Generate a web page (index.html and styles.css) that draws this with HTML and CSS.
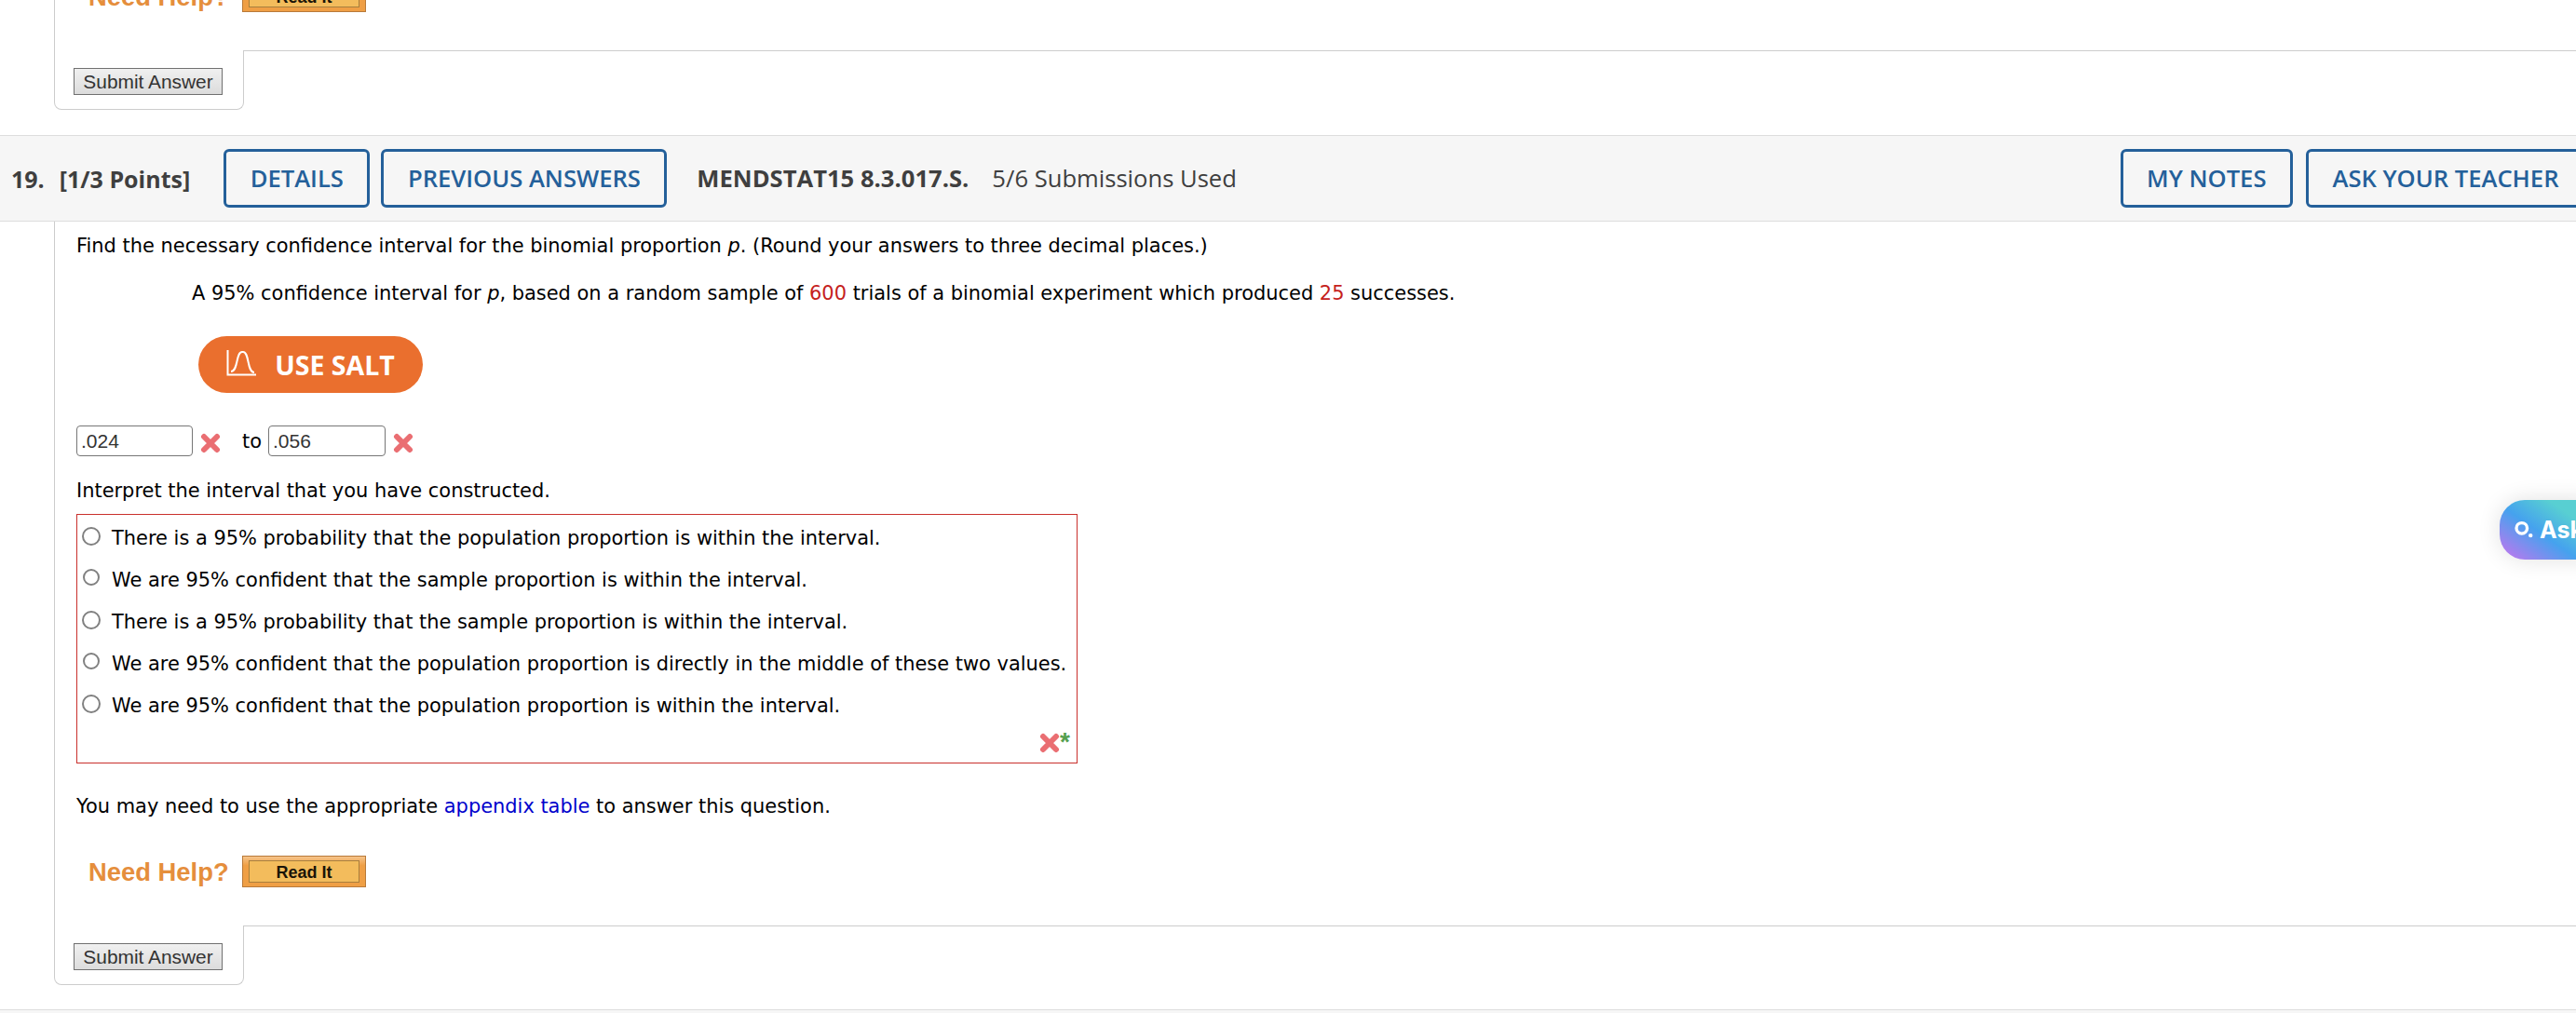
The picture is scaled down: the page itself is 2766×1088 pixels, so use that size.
FILE: index.html
```html
<!DOCTYPE html>
<html lang="en">
<head>
<meta charset="utf-8">
<title>Question 19</title>
<link rel="stylesheet" href="styles.css">
</head>
<body>
<svg class="defs" width="0" height="0" aria-hidden="true">
  <symbol id="cross" viewBox="0 0 22 22">
    <path d="M4 4 L18 18 M18 4 L4 18" fill="none" stroke="#ea6e72" stroke-width="6" stroke-linecap="round"/>
  </symbol>
</svg>
<main class="page">
  <div class="question-tail">
    <div class="body">
      <div class="help-row">
        <span class="need-help">Need Help?</span>
        <span class="read-it"><span class="read-it-inner">Read It</span></span>
      </div>
    </div>
    <div class="submit-row">
      <div class="submit-tab"><button class="submit-btn" type="button">Submit Answer</button></div>
      <div class="submit-rest"></div>
    </div>
  </div>

  <header class="band">
    <span class="q-num">19.</span>
    <span class="q-points">[1/3 Points]</span>
    <a class="band-btn band-btn-first">DETAILS</a>
    <a class="band-btn">PREVIOUS ANSWERS</a>
    <span class="q-code">MENDSTAT15 8.3.017.S.</span>
    <span class="q-subs">5/6 Submissions Used</span>
    <div class="band-right">
      <a class="band-btn">MY NOTES</a>
      <a class="band-btn">ASK YOUR TEACHER</a>
    </div>
  </header>

  <section class="question">
    <div class="body">
      <p class="line line-first">Find the necessary confidence interval for the binomial proportion <i>p</i>. (Round your answers to three decimal places.)</p>
      <p class="line line-indent">A 95% confidence interval for <i>p</i>, based on a random sample of <span class="red">600</span> trials of a binomial experiment which produced <span class="red">25</span> successes.</p>
      <a class="salt">
        <svg class="salt-icon" viewBox="0 0 32 28" aria-hidden="true">
          <path d="M1.500 0 V26.500 H32 M5 23 C13 23 10 2 17 2 H18 C25 2 22 24 30 24" fill="none" stroke="#fff" stroke-width="2"/>
        </svg>
        USE SALT
      </a>
      <div class="answers">
        <input class="answer answer-a" type="text" value=".024" aria-label="lower bound">
        <svg class="cross"><use href="#cross"/></svg>
        <span class="to">to</span>
        <input class="answer answer-b" type="text" value=".056" aria-label="upper bound">
        <svg class="cross"><use href="#cross"/></svg>
      </div>
      <p class="line line-interpret">Interpret the interval that you have constructed.</p>
      <div class="choices">
        <label class="choice"><input class="radio" type="radio" name="q19"><span>There is a 95% probability that the population proportion is within the interval.</span></label>
        <label class="choice"><input class="radio radio-sm" type="radio" name="q19"><span>We are 95% confident that the sample proportion is within the interval.</span></label>
        <label class="choice"><input class="radio" type="radio" name="q19"><span>There is a 95% probability that the sample proportion is within the interval.</span></label>
        <label class="choice"><input class="radio radio-sm" type="radio" name="q19"><span>We are 95% confident that the population proportion is directly in the middle of these two values.</span></label>
        <label class="choice"><input class="radio" type="radio" name="q19"><span>We are 95% confident that the population proportion is within the interval.</span></label>
        <div class="mark"><svg class="cross"><use href="#cross"/></svg><span class="star">*</span></div>
      </div>
      <p class="line line-appendix">You may need to use the appropriate <a class="link">appendix table</a> to answer this question.</p>
      <div class="help-row help-row-spaced">
        <span class="need-help">Need Help?</span>
        <span class="read-it"><span class="read-it-inner">Read It</span></span>
      </div>
    </div>
    <div class="submit-row">
      <div class="submit-tab"><button class="submit-btn" type="button">Submit Answer</button></div>
      <div class="submit-rest"></div>
    </div>
  </section>

  <div class="band band-next"></div>
</main>

<aside class="ask">
  <svg class="ask-icon" viewBox="0 0 18 18" aria-hidden="true">
    <circle cx="7" cy="7.500" r="5.200" fill="none" stroke="#fff" stroke-width="3"/>
    <circle cx="15.500" cy="14.500" r="2" fill="#fff"/>
  </svg>
  <span>Ask</span>
</aside>
</body>
</html>
```

FILE: styles.css
```css
html, body {
  margin: 0;
  padding: 0;
  height: 1088px;
  overflow: hidden;
  background: #fff;
}

body {
  position: relative;
  font-family: "DejaVu Sans", Verdana, sans-serif;
  font-size: 20.930px;
  color: #000;
}

.defs { position: absolute; }

.page {
  margin-top: -21px;
  height: 1109px;
  overflow: hidden;
}

.line {
  margin: 0;
  line-height: 32px;
  white-space: nowrap;
}

.line-first { padding-top: 10px; }
.line-indent { margin: 19px 0 0 124px; }
.line-interpret { margin-top: 21px; }
.line-appendix { margin-top: 30px; }

.question,
.question-tail {
  margin-left: 58px;
}

.body {
  border-left: 1px solid #ccc;
  padding: 0 0 41px 23px;
}

.red { color: #c5211c; }
.link { color: #0000cc; }

/* band */
.band {
  display: flex;
  align-items: center;
  height: 91px;
  margin-top: 27px;
  background: #f6f6f6;
  border-top: 1px solid #ddd;
  border-bottom: 1px solid #ddd;
  font-family: "Open Sans", sans-serif;
  font-size: 25.600px;
  color: #3f3f3f;
  white-space: nowrap;
  overflow: hidden;
}

.band-next {
  height: 3px;
  margin-top: 26px;
  border-bottom: 0;
}

.q-num {
  margin-left: 12px;
  font-size: 25px;
  font-weight: 700;
}

.q-points {
  margin-left: 16px;
  font-size: 25px;
  font-weight: 700;
}

.q-code {
  margin-left: 32px;
  font-weight: 700;
}

.q-subs { margin-left: 25px; }

.band-btn {
  box-sizing: border-box;
  display: flex;
  align-items: center;
  height: 63px;
  padding: 0 25.500px;
  border: 3px solid #24609a;
  border-radius: 6px;
  color: #24609a;
  font-weight: 600;
  margin-left: 12px;
}

.band-btn-first { margin-left: 36px; }

.band-right {
  display: flex;
  flex-shrink: 0;
  margin-left: auto;
  margin-right: -10px;
}

.band-right .band-btn { margin-left: 14px; }

/* salt */
.salt {
  display: flex;
  align-items: center;
  justify-content: center;
  gap: 20px;
  box-sizing: border-box;
  width: 241px;
  height: 61px;
  margin: 30px 0 0 131px;
  border-radius: 31px;
  background: #ea6f2e;
  color: #fff;
  font-family: "Open Sans", sans-serif;
  font-weight: 700;
  font-size: 28.500px;
}

.salt-icon {
  width: 32px;
  height: 28px;
  margin-top: -4px;
}

/* answers */
.answers {
  display: flex;
  align-items: center;
  height: 33px;
  margin-top: 35px;
}

.answer {
  box-sizing: border-box;
  height: 33px;
  padding: 0 4px;
  border: 1px solid #767676;
  border-radius: 4px;
  font-family: "Liberation Sans", Arial, sans-serif;
  font-size: 21px;
  color: #333;
  background: #fff;
}

.answer-a { width: 125px; }
.answer-b { width: 126px; }

.cross {
  display: block;
  width: 22px;
  height: 22px;
  flex-shrink: 0;
}

.answers .cross {
  margin: 5px 0 0 8px;
}

.to {
  margin: 0 7px 0 23px;
}

/* choices */
.choices {
  box-sizing: border-box;
  width: 1075px;
  height: 268px;
  margin-top: 9px;
  padding-top: 2px;
  border: 1px solid #c9302c;
}

.choice {
  display: flex;
  align-items: center;
  height: 45px;
  white-space: nowrap;
}

.radio {
  appearance: none;
  box-sizing: border-box;
  flex-shrink: 0;
  width: 20px;
  height: 20px;
  margin: -4px 12px 0 5px;
  border: 2px solid #808080;
  border-radius: 50%;
  background: #fff;
}

.radio-sm {
  width: 18px;
  height: 18px;
  margin: -6px 13px 0 6px;
}

.mark {
  display: flex;
  justify-content: flex-end;
  align-items: flex-start;
  padding: 7px 7px 0 0;
}

.star {
  color: #55a04f;
  font-family: "Liberation Sans", Arial, sans-serif;
  font-weight: 700;
  font-size: 28px;
  line-height: 20px;
  width: 11px;
}

/* help */
.help-row {
  display: flex;
  align-items: center;
  height: 34px;
  margin-left: 13px;
}

.help-row-spaced { margin-top: 37px; }

.need-help {
  width: 165px;
  padding-top: 1px;
  font-family: "Liberation Sans", Arial, sans-serif;
  font-weight: 700;
  font-size: 27.400px;
  color: #e58e3c;
}

.read-it {
  box-sizing: border-box;
  display: flex;
  width: 133px;
  height: 34px;
  padding: 4px 6px;
  background: linear-gradient(#f6c48a, #ef9f45 30%);
  border: 1px solid #b87a3a;
}

.read-it-inner {
  flex: 1;
  display: flex;
  align-items: center;
  justify-content: center;
  padding-top: 2px;
  background: #f3bc5c;
  border: 1px solid #a87f3d;
  font-family: "Liberation Sans", Arial, sans-serif;
  font-weight: 700;
  font-size: 18px;
  color: #1a1408;
}

/* submit */
.submit-row {
  display: flex;
}

.submit-tab {
  box-sizing: border-box;
  width: 204px;
  height: 64px;
  padding: 19px 0 0 20px;
  background: #fff;
  border: 1px solid #ccc;
  border-top: 0;
  border-radius: 0 0 8px 8px;
}

.submit-rest {
  flex: 1;
  border-top: 1px solid #ccc;
}

.submit-btn {
  box-sizing: border-box;
  display: block;
  width: 160px;
  height: 29px;
  padding: 0;
  border: 1px solid #707070;
  background: linear-gradient(#f0f0f0, #dcdcdc);
  font-family: "Liberation Sans", Arial, sans-serif;
  font-size: 20.900px;
  line-height: 26px;
  color: #333;
}

/* floating ask */
.ask {
  position: absolute;
  top: 537px;
  left: 2684px;
  width: 120px;
  height: 64px;
  display: flex;
  align-items: center;
  gap: 7px;
  padding-left: 16px;
  box-sizing: border-box;
  border-radius: 27px;
  background: linear-gradient(35deg, #bb78ee 5%, #45a2ee 40%, #58cfd2 68%);
  box-shadow: 0 0 24px rgba(0, 0, 0, 0.12);
  color: #fff;
  font-family: Inter, "Open Sans", sans-serif;
  font-weight: 700;
  font-size: 25px;
}

.ask-icon {
  width: 20px;
  height: 20px;
  flex-shrink: 0;
}
```
